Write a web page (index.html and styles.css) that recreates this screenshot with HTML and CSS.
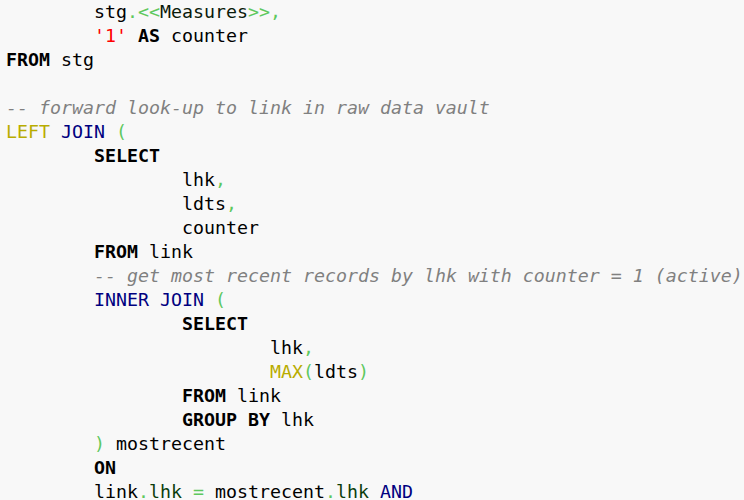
FILE: index.html
```html
<!DOCTYPE html>
<html>
<head>
<meta charset="utf-8">
<link rel="stylesheet" href="styles.css">
</head>
<body>
<pre class="code">        stg<span class="p">.&lt;&lt;</span><span class="ph">Measures</span><span class="p">&gt;&gt;,</span>
        <span class="str">'1'</span> <b class="kw">AS</b> counter
<b class="kw">FROM</b> stg

<i class="cm">-- forward look-up to link in raw data vault</i>
<span class="ol">LEFT</span> <span class="nv">JOIN</span> <span class="p">(</span>
        <b class="kw">SELECT</b>
                lhk<span class="p">,</span>
                ldts<span class="p">,</span>
                counter
        <b class="kw">FROM</b> link
        <i class="cm">-- get most recent records by lhk with counter = 1 (active)</i>
        <span class="nv">INNER</span> <span class="nv">JOIN</span> <span class="p">(</span>
                <b class="kw">SELECT</b>
                        lhk<span class="p">,</span>
                        <span class="ol">MAX</span><span class="p">(</span>ldts<span class="p">)</span>
                <b class="kw">FROM</b> link
                <b class="kw">GROUP BY</b> lhk
        <span class="p">)</span> mostrecent
        <b class="kw">ON</b>
        link<span class="p">.</span><span class="fld">lhk</span> <span class="p">=</span> mostrecent<span class="p">.</span><span class="fld">lhk</span> <span class="nv">AND</span></pre>
</body>
</html>
```
FILE: styles.css
```css
html, body {
  margin: 0;
  padding: 0;
  background: #f8f8f8;
  overflow: hidden;
}
.code {
  margin: 0;
  padding: 0 0 0 6px;
  font-family: "DejaVu Sans Mono", "Liberation Mono", monospace;
  font-size: 18.27px;
  line-height: 24px;
  color: #000;
  white-space: pre;
}
.kw { font-weight: bold; color: #000; }
.p { color: #5ec85e; }
.ph { color: #0a1a0a; }
.str { color: #ff0000; }
.cm { color: #808080; font-style: italic; }
.ol { color: #b8ac00; }
.nv { color: #000080; }
.fld { color: #0b3d0b; }
```
